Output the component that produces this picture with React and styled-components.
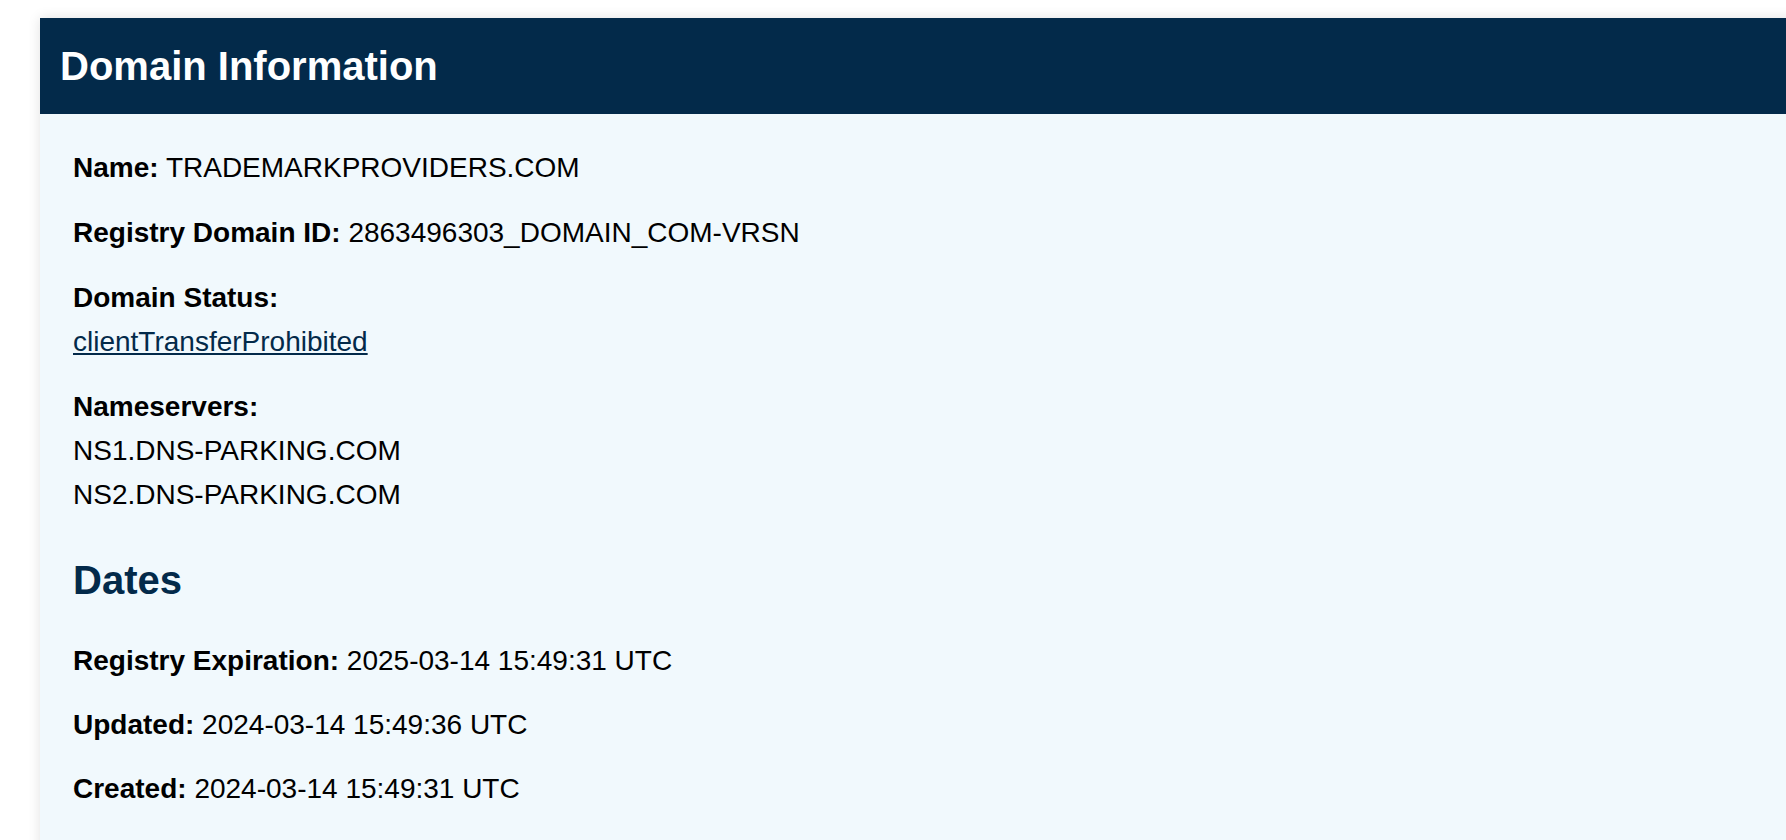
import React from 'react';
import styled, { createGlobalStyle } from 'styled-components';

const GlobalStyle = createGlobalStyle`
  html, body {
    margin: 0;
    padding: 0;
    background: #ffffff;
    overflow: hidden;
  }

  body {
    font-family: "Liberation Sans", Arial, Helvetica, sans-serif;
    color: #000;
  }
`;

const domain = {
  name: 'TRADEMARKPROVIDERS.COM',
  registryId: '2863496303_DOMAIN_COM-VRSN',
  status: ['clientTransferProhibited'],
  nameservers: ['NS1.DNS-PARKING.COM', 'NS2.DNS-PARKING.COM'],
  dates: [
    { label: 'Registry Expiration', value: '2025-03-14 15:49:31 UTC' },
    { label: 'Updated', value: '2024-03-14 15:49:36 UTC' },
    { label: 'Created', value: '2024-03-14 15:49:31 UTC' },
  ],
};

function App() {
  return (
    <>
      <GlobalStyle />
      <Page>
        <Card>
          <CardHeader>
            <CardTitle>Domain Information</CardTitle>
          </CardHeader>
          <CardBody>
            <Field>
              <Label>Name:</Label> {domain.name}
            </Field>
            <Field>
              <Label>Registry Domain ID:</Label> {domain.registryId}
            </Field>
            <Field>
              <Label>Domain Status:</Label>
              {domain.status.map((s) => (
                <StatusLink key={s} href="#">
                  {s}
                </StatusLink>
              ))}
            </Field>
            <Field>
              <Label>Nameservers:</Label>
              {domain.nameservers.map((ns) => (
                <Line key={ns}>{ns}</Line>
              ))}
            </Field>

            <SectionTitle>Dates</SectionTitle>
            {domain.dates.map((d) => (
              <Field key={d.label} $compact>
                <Label>{d.label}:</Label> {d.value}
              </Field>
            ))}
          </CardBody>
        </Card>
      </Page>
    </>
  );
}

export default App;

const Page = styled.div`
  padding: 18px 0 0 40px;
  min-height: 822px;
`;

const Card = styled.section`
  width: 1800px;
  min-height: 820px;
  background: #f1f9fd;
  box-shadow: 0 0 12px rgba(0, 0, 0, 0.12);
`;

const CardHeader = styled.header`
  background: #032a4a;
  padding: 20px 20px;
`;

const CardTitle = styled.h2`
  margin: 0;
  color: #ffffff;
  font-size: 40px;
  line-height: 56px;
  font-weight: bold;
`;

const CardBody = styled.div`
  padding: 31.5px 33px;
  font-size: 28px;
  line-height: 44px;
`;

const Field = styled.p`
  margin: 0 0 ${({ $compact }) => ($compact ? '20px' : '21.3px')};
`;

const Label = styled.strong`
  font-weight: bold;
`;

const Line = styled.span`
  display: block;
`;

const StatusLink = styled.a`
  display: block;
  color: #032a4a;
  text-decoration: underline;
`;

const SectionTitle = styled.h3`
  margin: 40.5px 0 36px;
  color: #032a4a;
  font-size: 40px;
  line-height: 45.6px;
  font-weight: bold;
`;
